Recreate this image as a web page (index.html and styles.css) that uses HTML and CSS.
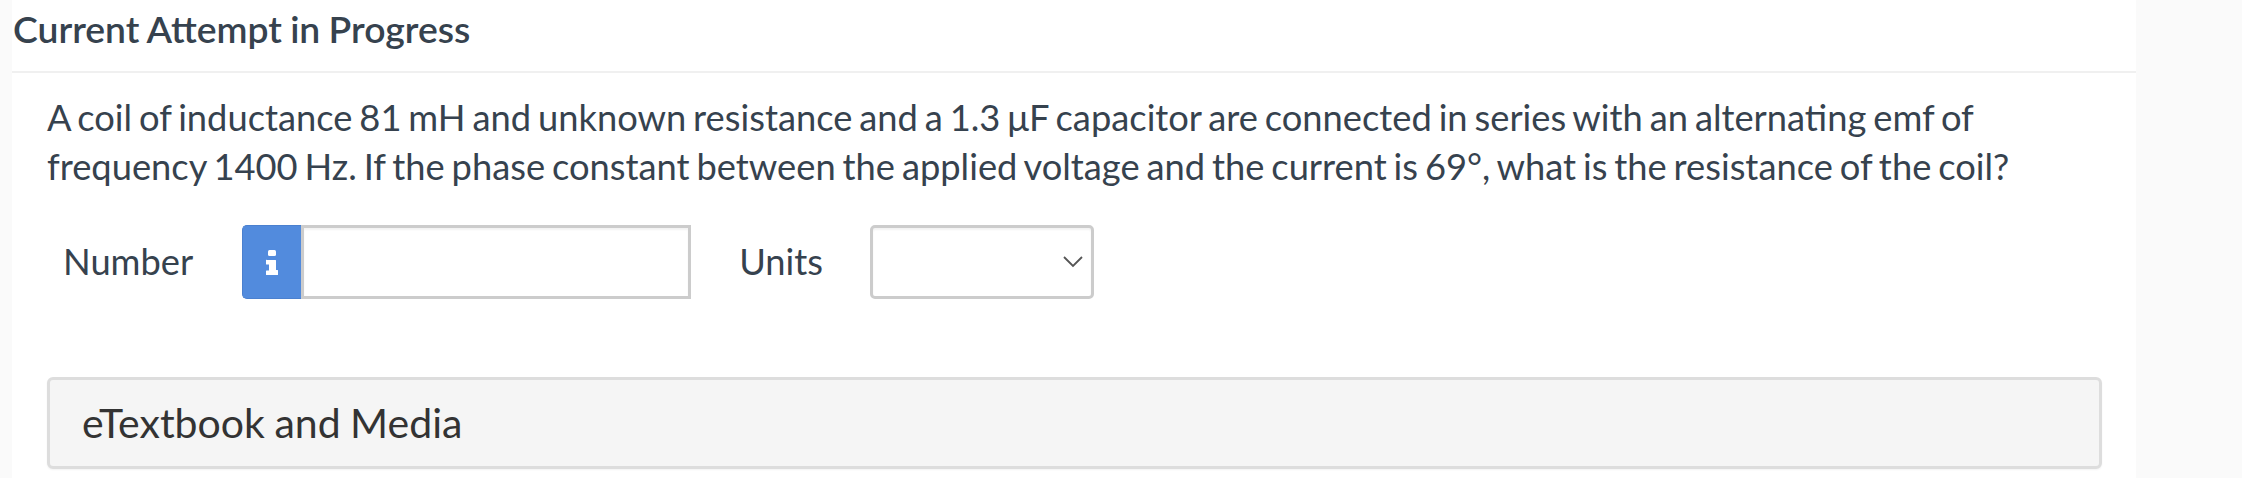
FILE: index.html
```html
<!DOCTYPE html>
<html lang="en">
  <head>
    <meta charset="UTF-8" />
    <title>Current Attempt in Progress</title>
    <link rel="stylesheet" href="styles.css">
  </head>
  <body>
    <main class="page">
      <h2 class="heading">Current Attempt in Progress</h2>
      <div class="question">
        <p class="prompt">A coil of inductance 81 mH and unknown resistance and a 1.3 μF capacitor are connected in series with an alternating emf of<br>frequency 1400 Hz. If the phase constant between the applied voltage and the current is 69°, what is the resistance of the coil?</p>
        <form class="answerRow">
          <label class="fieldLabel" for="number">Number</label>
          <div class="inputGroup">
            <button class="infoButton" type="button" aria-label="Info">
              <svg class="infoIcon" viewBox="0 0 12 25" aria-hidden="true">
                <rect x="2" y="0" width="8" height="6" rx="1.5" />
                <path d="M1 10h8.500a.5.5 0 0 1 .5.5V20h1.500a.5.5 0 0 1 .5.5v4a.5.5 0 0 1-.5.5H.5a.5.5 0 0 1-.5-.5v-3.500a.5.5 0 0 1 .5-.5H3v-6H.5a.5.5 0 0 1-.5-.5v-3.500a.5.5 0 0 1 1-.5z" />
              </svg>
            </button>
            <input class="numberInput" id="number" type="text">
          </div>
          <label class="fieldLabel unitsLabel" for="units">Units</label>
          <div class="selectWrap">
            <select class="unitsSelect" id="units">
              <option></option>
            </select>
            <svg class="chevron" viewBox="0 0 20 12" aria-hidden="true">
              <path d="M1 1l9 9 9-9" />
            </svg>
          </div>
        </form>
        <div class="mediaPanel">eTextbook and Media</div>
      </div>
    </main>
  </body>
</html>
```
FILE: styles.css
```css
body {
  margin: 0;
  padding: 0;
  background: #fafafa;
  font-family: "Lato", "Liberation Sans", sans-serif;
  color: #36424e;
}

.page {
  width: 2124px;
  height: 478px;
  margin-left: 12px;
  background: #ffffff;
  overflow: hidden;
}

.heading {
  margin: 0;
  height: 71px;
  padding-left: 1px;
  border-bottom: 2px solid #f0f0f0;
  font-size: 37.300px;
  font-weight: 600;
  line-height: 58px;
  word-spacing: -1px;
}

.question {
  padding: 0 34px 0 35px;
}

.prompt {
  margin: 0;
  padding-top: 20px;
  font-size: 36.300px;
  line-height: 49px;
  word-spacing: -2.400px;
}

.answerRow {
  display: flex;
  align-items: center;
  margin-top: 34px;
  padding-left: 16px;
}

.fieldLabel {
  padding-bottom: 2px;
  font-size: 36.300px;
  margin-right: 49px;
}

.unitsLabel {
  margin-left: 48px;
  margin-right: 47px;
}

.inputGroup {
  display: flex;
  height: 74px;
}

.infoButton {
  display: flex;
  align-items: center;
  justify-content: center;
  width: 59px;
  padding: 0;
  background: #528bdd;
  border: 1px solid #4a80cf;
  border-right: 0;
  border-radius: 5px 0 0 5px;
}

.infoIcon {
  width: 12px;
  height: 25px;
  fill: #ffffff;
}

.numberInput {
  width: 390px;
  box-sizing: border-box;
  border: 3px solid #cccccc;
  border-radius: 0;
  box-shadow: inset 0 2px 2px rgba(0, 0, 0, 0.05);
  outline: none;
}

.selectWrap {
  position: relative;
  width: 224px;
  height: 74px;
}

.unitsSelect {
  width: 100%;
  height: 100%;
  box-sizing: border-box;
  appearance: none;
  background: #ffffff;
  border: 3px solid #cccccc;
  border-radius: 5px;
  box-shadow: inset 0 2px 2px rgba(0, 0, 0, 0.05);
}

.chevron {
  position: absolute;
  right: 11px;
  top: 31px;
  width: 20px;
  height: 12px;
  fill: none;
  stroke: #555555;
  stroke-width: 1.800;
}

.mediaPanel {
  height: 92px;
  box-sizing: border-box;
  margin-top: 78px;
  padding-left: 32px;
  background: #f5f5f5;
  border: 3px solid #dddddd;
  border-radius: 6px;
  box-shadow: 0 1px 2px rgba(0, 0, 0, 0.05);
  color: #333333;
  font-size: 41px;
  line-height: 85px;
  word-spacing: -1px;
}
```
